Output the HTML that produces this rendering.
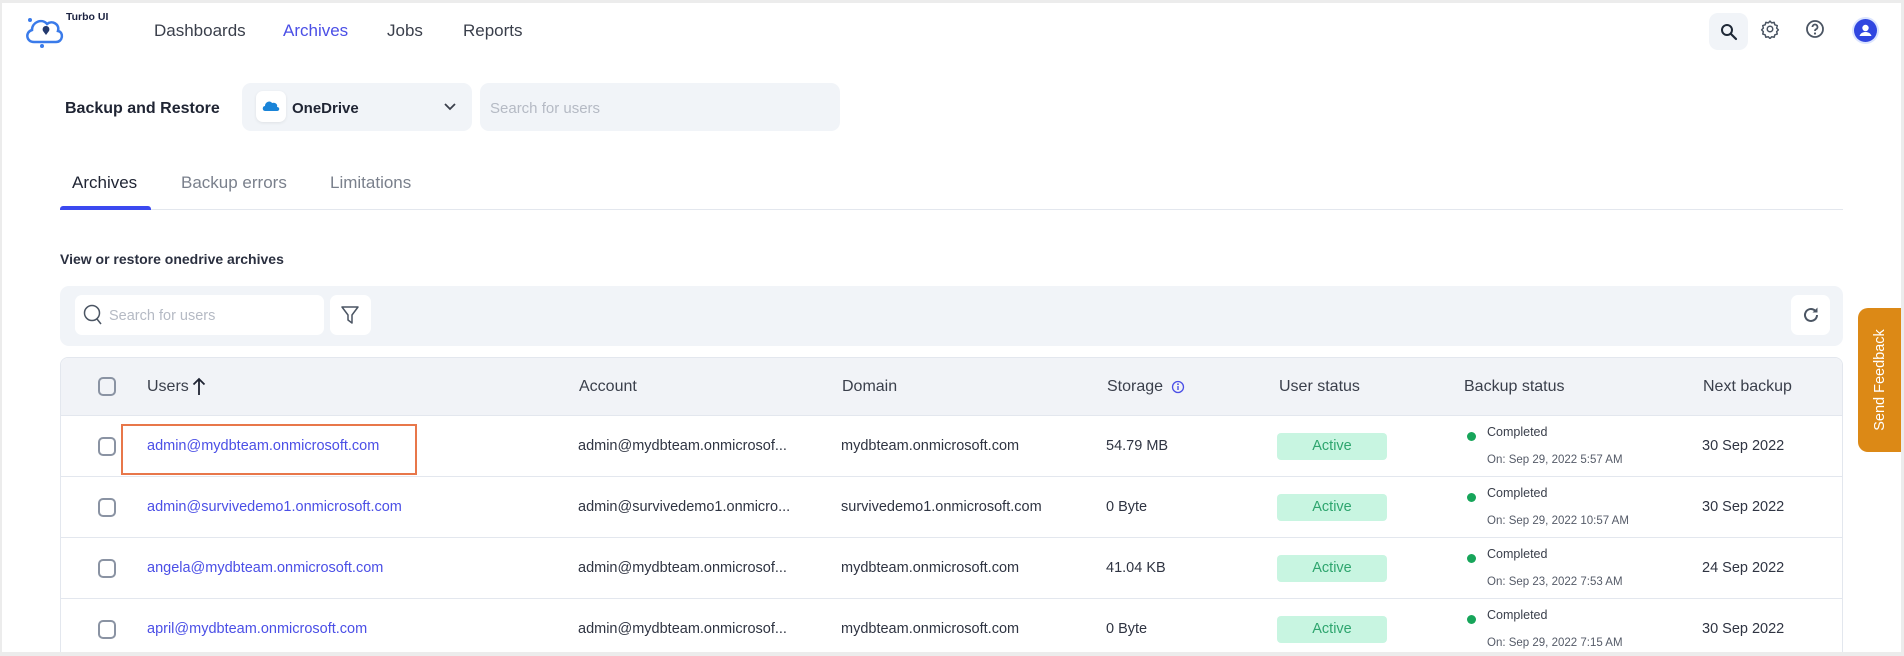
<!DOCTYPE html>
<html><head><meta charset="utf-8"><style>
*{box-sizing:border-box;margin:0;padding:0}
body{width:1904px;height:656px;background:#ececec;font-family:"Liberation Sans",Arial,sans-serif;position:relative;overflow:hidden;color:#2b3040}
#page{position:absolute;left:2px;top:3px;width:1899px;height:649px;background:#fff;overflow:hidden}
.a{position:absolute;white-space:nowrap}
.nav{font-size:17px;color:#3a3f4b;top:18px}
.gray{background:#f1f4f8;border-radius:9px}
.th{font-size:16px;color:#3a3f4b;top:0;line-height:58px}
.row{position:absolute;left:58px;width:1783px;height:61px;border-top:1px solid #e3e7ee}
.row .a{font-size:14.5px;color:#2f3442;line-height:61px;top:0}
.cb{position:absolute;left:38px;top:21px;width:18px;height:19px;border:2px solid #8a93a3;border-radius:5px;background:#fff}
.link{color:#4b4fe6!important}
.badge{position:absolute;left:1217px;top:17px;width:110px;height:27px;background:#c8f5e1;border-radius:4px;color:#2ea56e;font-size:14.5px;text-align:center;line-height:27px}
.dot{position:absolute;left:1407px;top:16px;width:9px;height:9px;border-radius:50%;background:#17a55a}
.c1{position:absolute;left:1427px;top:9px;font-size:12.5px;color:#3a3f4b}
.c2{position:absolute;left:1427px;top:38px;font-size:11.5px;color:#555b68}
</style></head><body>
<div id="page">
<svg class="a" style="left:20px;top:9px" width="48" height="36" viewBox="0 0 48 36"><path d="M12 30 C4 30 3 20 10 18 C10 10 20 6 25 12 C30 8 38 12 36 19 C42 20 41 30 34 30 Z" fill="none" stroke="#3a7bea" stroke-width="2.5"/><path d="M24 14c-3 0-4 3-3 5l3 4 3-4c1-2 0-5-3-5z" fill="#243a6e"/><circle cx="8" cy="8" r="2" fill="#3a7bea"/><circle cx="20" cy="34" r="2" fill="#3a7bea"/></svg>
<div class="a" style="left:64px;top:8px;font-size:10.5px;font-weight:bold;color:#1b2240">Turbo UI</div>
<div class="a nav" style="left:152px">Dashboards</div>
<div class="a nav" style="left:281px;color:#4b4fe6">Archives</div>
<div class="a nav" style="left:385px">Jobs</div>
<div class="a nav" style="left:461px">Reports</div>
<div class="a gray" style="left:1707px;top:10px;width:39px;height:37px"></div>
<svg class="a" style="left:1717px;top:19px" width="20" height="20" viewBox="0 0 20 20"><circle cx="8" cy="8" r="5" fill="none" stroke="#1f2937" stroke-width="2"/><path d="M12 12l5 5" stroke="#1f2937" stroke-width="2.2" stroke-linecap="round"/></svg>
<svg class="a" style="left:1758px;top:16px" width="20" height="20" viewBox="0 0 24 24"><path d="M12 2.5l2 2.2 3-.6.8 2.9 2.9.9-.7 3 2 2.1-2 2.1.7 3-2.9.9-.8 2.9-3-.6-2 2.2-2-2.2-3 .6-.8-2.9-2.9-.9.7-3-2-2.1 2-2.1-.7-3 2.9-.9.8-2.9 3 .6z" fill="none" stroke="#4b5563" stroke-width="1.8" stroke-linejoin="round"/><circle cx="12" cy="12" r="3.3" fill="none" stroke="#4b5563" stroke-width="1.8"/></svg>
<svg class="a" style="left:1803px;top:16px" width="20" height="20" viewBox="0 0 20 20"><circle cx="10" cy="10" r="8" fill="none" stroke="#4b5563" stroke-width="1.8"/><path d="M7.5 8a2.5 2.5 0 1 1 3.5 2.3c-.8.4-1 .9-1 1.7" fill="none" stroke="#4b5563" stroke-width="1.8"/><circle cx="10" cy="14.5" r="1.1" fill="#4b5563"/></svg>
<div class="a" style="left:1850px;top:14px;width:27px;height:27px;border-radius:50%;background:#dbe4ff"></div>
<svg class="a" style="left:1852px;top:16px" width="23" height="23" viewBox="0 0 23 23"><circle cx="11.5" cy="11.5" r="11.5" fill="#3046e0"/><circle cx="11.5" cy="9" r="3.2" fill="#fff"/><path d="M5.5 17c1-3 3.5-4 6-4s5 1 6 4z" fill="#fff"/></svg>

<div class="a" style="left:63px;top:97px;font-size:16px;font-weight:bold;color:#1f2433">Backup and Restore</div>
<div class="a gray" style="left:240px;top:80px;width:230px;height:48px"></div>
<div class="a" style="left:254px;top:88px;width:30px;height:31px;background:#fff;border-radius:7px;box-shadow:0 1px 3px rgba(0,0,0,.08)"></div>
<svg class="a" style="left:260px;top:96px" width="18" height="14" viewBox="0 0 18 14"><path d="M3 12c-3 0-3-5 0-5 0-4 5-6 7-3 3-1 6 1 5 4 3 0 3 4 0 4z" fill="#1a84d8"/></svg>
<div class="a" style="left:290px;top:97px;font-size:15px;font-weight:bold;color:#1f2433">OneDrive</div>
<svg class="a" style="left:441px;top:99px" width="14" height="10" viewBox="0 0 14 10"><path d="M2 2l5 5 5-5" fill="none" stroke="#3a3f4b" stroke-width="1.8"/></svg>
<div class="a gray" style="left:478px;top:80px;width:360px;height:48px"></div>
<div class="a" style="left:488px;top:97px;font-size:15px;color:#b5bac4">Search for users</div>

<div class="a" style="left:70px;top:170px;font-size:17px;color:#1f2433">Archives</div>
<div class="a" style="left:179px;top:170px;font-size:17px;color:#7a808c">Backup errors</div>
<div class="a" style="left:328px;top:170px;font-size:17px;color:#7a808c">Limitations</div>
<div class="a" style="left:58px;top:206px;width:1783px;height:1px;background:#e3e7ee"></div>
<div class="a" style="left:58px;top:203px;width:91px;height:4px;background:#3b49f0;border-radius:3px 3px 0 0"></div>

<div class="a" style="left:58px;top:248px;font-size:14px;font-weight:bold;color:#2b3040">View or restore onedrive archives</div>

<div class="a gray" style="left:58px;top:283px;width:1783px;height:60px"></div>
<div class="a" style="left:73px;top:292px;width:249px;height:40px;background:#fff;border-radius:7px"></div>
<svg class="a" style="left:81px;top:301px" width="20" height="22" viewBox="0 0 20 22"><circle cx="9" cy="9" r="7.5" fill="none" stroke="#4b5563" stroke-width="1.5"/><path d="M14 15l4 5" stroke="#4b5563" stroke-width="1.5"/></svg>
<div class="a" style="left:107px;top:305px;font-size:14.5px;color:#b5bac4">Search for users</div>
<div class="a" style="left:328px;top:292px;width:41px;height:40px;background:#fff;border-radius:7px"></div>
<svg class="a" style="left:338px;top:302px" width="20" height="20" viewBox="0 0 20 20"><path d="M2 2h16l-6 8v8l-4-3v-5z" fill="none" stroke="#4b5563" stroke-width="1.5" stroke-linejoin="round"/></svg>
<div class="a" style="left:1789px;top:292px;width:39px;height:40px;background:#fff;border-radius:7px"></div>
<svg class="a" style="left:1799px;top:302px" width="20" height="20" viewBox="0 0 20 20"><path d="M16 10a6 6 0 1 1-2-4.5" fill="none" stroke="#4b5563" stroke-width="2"/><path d="M16.5 2.5v5h-5z" fill="#4b5563"/></svg>

<div class="a" style="left:58px;top:354px;width:1783px;height:300px;border:1px solid #e3e7ee;border-radius:8px 8px 0 0;overflow:hidden">
 <div style="position:absolute;left:0;top:0;width:100%;height:58px;background:#f1f3f7"></div>
 <div class="cb" style="left:37px;top:19px;background:transparent"></div>
 <div class="a th" style="left:86px">Users</div>
 <svg class="a" style="left:131px;top:18px" width="14" height="20" viewBox="0 0 14 20"><path d="M7 19V3M1.5 8.5L7 3l5.5 5.5" fill="none" stroke="#1f2433" stroke-width="1.8"/></svg>
 <div class="a th" style="left:518px">Account</div>
 <div class="a th" style="left:781px">Domain</div>
 <div class="a th" style="left:1046px">Storage</div>
 <svg class="a" style="left:1110px;top:22px" width="14" height="14" viewBox="0 0 14 14"><circle cx="7" cy="7" r="5.5" fill="none" stroke="#4b4fe6" stroke-width="1.3"/><path d="M7 6v4" stroke="#4b4fe6" stroke-width="1.4"/><circle cx="7" cy="4.2" r=".9" fill="#4b4fe6"/></svg>
 <div class="a th" style="left:1218px">User status</div>
 <div class="a th" style="left:1403px">Backup status</div>
 <div class="a th" style="left:1642px">Next backup</div>
</div>

<div class="row" style="top:412px"><div class="cb"></div><div class="a link" style="left:87px">admin@mydbteam.onmicrosoft.com</div><div class="a" style="left:518px">admin@mydbteam.onmicrosof...</div><div class="a" style="left:781px">mydbteam.onmicrosoft.com</div><div class="a" style="left:1046px">54.79 MB</div><div class="badge" style="left:1217px;top:17px">Active</div><div class="dot"></div><div class="c1">Completed</div><div class="c2">On: Sep 29, 2022 5:57 AM</div><div class="a" style="left:1642px">30 Sep 2022</div></div>
<div class="row" style="top:473px"><div class="cb"></div><div class="a link" style="left:87px">admin@survivedemo1.onmicrosoft.com</div><div class="a" style="left:518px">admin@survivedemo1.onmicro...</div><div class="a" style="left:781px">survivedemo1.onmicrosoft.com</div><div class="a" style="left:1046px">0 Byte</div><div class="badge">Active</div><div class="dot"></div><div class="c1">Completed</div><div class="c2">On: Sep 29, 2022 10:57 AM</div><div class="a" style="left:1642px">30 Sep 2022</div></div>
<div class="row" style="top:534px"><div class="cb"></div><div class="a link" style="left:87px">angela@mydbteam.onmicrosoft.com</div><div class="a" style="left:518px">admin@mydbteam.onmicrosof...</div><div class="a" style="left:781px">mydbteam.onmicrosoft.com</div><div class="a" style="left:1046px">41.04 KB</div><div class="badge">Active</div><div class="dot"></div><div class="c1">Completed</div><div class="c2">On: Sep 23, 2022 7:53 AM</div><div class="a" style="left:1642px">24 Sep 2022</div></div>
<div class="row" style="top:595px"><div class="cb"></div><div class="a link" style="left:87px">april@mydbteam.onmicrosoft.com</div><div class="a" style="left:518px">admin@mydbteam.onmicrosof...</div><div class="a" style="left:781px">mydbteam.onmicrosoft.com</div><div class="a" style="left:1046px">0 Byte</div><div class="badge">Active</div><div class="dot"></div><div class="c1">Completed</div><div class="c2">On: Sep 29, 2022 7:15 AM</div><div class="a" style="left:1642px">30 Sep 2022</div></div>

<div class="a" style="left:119px;top:421px;width:296px;height:51px;border:2.5px solid #e8774a"></div>

<div class="a" style="left:1856px;top:305px;width:45px;height:144px;background:#dc8916;border-radius:10px 0 0 10px"></div>
<div class="a" style="left:1878px;top:377px;transform:translate(-50%,-50%) rotate(-90deg);font-size:14.5px;color:#fff">Send Feedback</div>
</div>
</body></html>
